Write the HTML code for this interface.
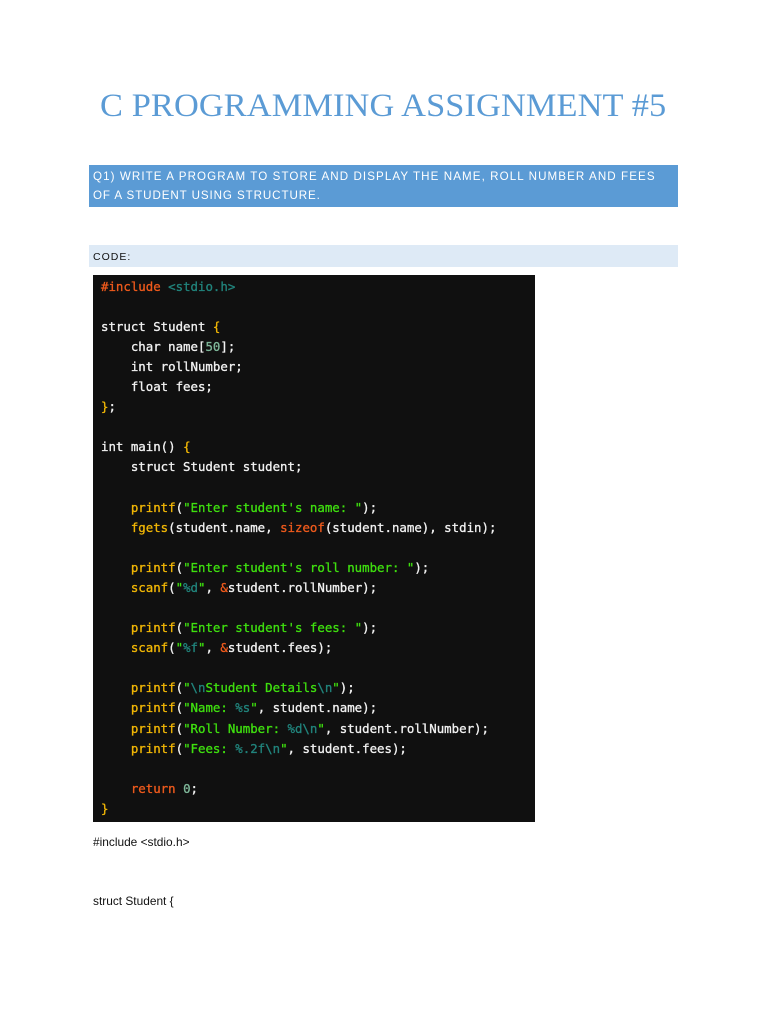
<!DOCTYPE html>
<html>
<head>
<meta charset="utf-8">
<style>
html,body{margin:0;padding:0;background:#fff;}
body{width:768px;height:1024px;position:relative;overflow:hidden;font-family:"Liberation Sans",sans-serif;}
.a{position:absolute;white-space:pre;}
#title{left:100px;top:87px;font:32.5px/38px "Liberation Serif",serif;color:#5b9bd5;letter-spacing:.1px;transform:scaleX(1.057);transform-origin:0 0;}
#q{left:89px;top:165px;width:589px;height:42px;background:#5b9bd5;}
.qt{left:93px;color:#fff;font-size:11.6px;line-height:19px;}
#c{left:89px;top:245px;width:589px;height:22px;background:#deeaf6;}
#ct{left:93px;top:247.5px;font-size:10.5px;line-height:18px;letter-spacing:1px;color:#111;}
#code{left:93px;top:275px;width:442px;height:547px;background:#101010;}
#pre{left:101px;top:276.5px;margin:0;font:12.4px/20.1px "DejaVu Sans Mono",monospace;color:#f2f2f2;-webkit-text-stroke:.3px currentColor;}
.r{color:#ef5a1c}.t{color:#21847c}.y{color:#f2b705}.g{color:#3fe00f}.n{color:#7fb89a}
.b{left:93px;font-size:11.9px;line-height:16px;color:#111;}
</style>
</head>
<body>
<div class="a" id="title">C PROGRAMMING ASSIGNMENT #5</div>
<div class="a" id="q"></div>
<div class="a qt" style="top:167px;letter-spacing:1.08px">Q1) WRITE A PROGRAM TO STORE AND DISPLAY THE NAME, ROLL NUMBER AND FEES</div>
<div class="a qt" style="top:186px;letter-spacing:.91px">OF A STUDENT USING STRUCTURE.</div>
<div class="a" id="c"></div>
<div class="a" id="ct">CODE:</div>
<div class="a" id="code"></div>
<pre class="a" id="pre"><span class="r">#include</span> <span class="t">&lt;stdio.h&gt;</span>

struct Student <span class="y">{</span>
    char name[<span class="n">50</span>];
    int rollNumber;
    float fees;
<span class="y">}</span>;

int main() <span class="y">{</span>
    struct Student student;

    <span class="y">printf</span>(<span class="g">"Enter student's name: "</span>);
    <span class="y">fgets</span>(student.name, <span class="r">sizeof</span>(student.name), stdin);

    <span class="y">printf</span>(<span class="g">"Enter student's roll number: "</span>);
    <span class="y">scanf</span>(<span class="g">"</span><span class="t">%d</span><span class="g">"</span>, <span class="r">&amp;</span>student.rollNumber);

    <span class="y">printf</span>(<span class="g">"Enter student's fees: "</span>);
    <span class="y">scanf</span>(<span class="g">"</span><span class="t">%f</span><span class="g">"</span>, <span class="r">&amp;</span>student.fees);

    <span class="y">printf</span>(<span class="g">"</span><span class="t">\n</span><span class="g">Student Details</span><span class="t">\n</span><span class="g">"</span>);
    <span class="y">printf</span>(<span class="g">"Name: </span><span class="t">%s</span><span class="g">"</span>, student.name);
    <span class="y">printf</span>(<span class="g">"Roll Number: </span><span class="t">%d\n</span><span class="g">"</span>, student.rollNumber);
    <span class="y">printf</span>(<span class="g">"Fees: </span><span class="t">%.2f\n</span><span class="g">"</span>, student.fees);

    <span class="r">return</span> <span class="n">0</span>;
<span class="y">}</span></pre>
<div class="a b" style="top:834px">#include &lt;stdio.h&gt;</div>
<div class="a b" style="top:893px">struct Student {</div>
</body>
</html>
